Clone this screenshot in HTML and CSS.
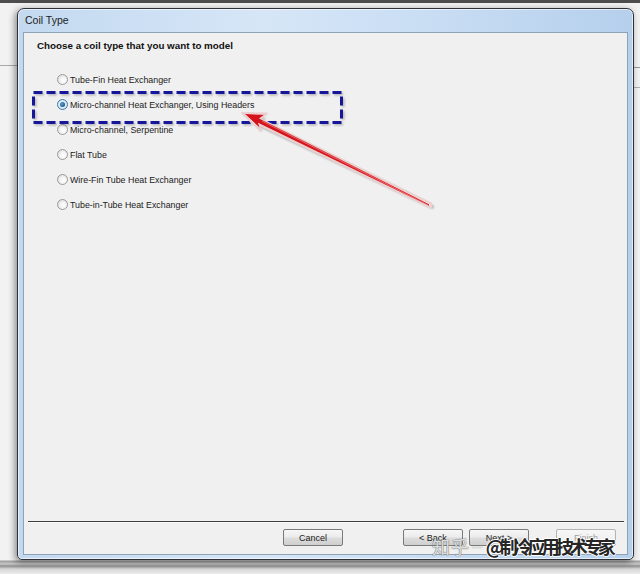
FILE: index.html
```html
<!DOCTYPE html>
<html lang="en">
<head>
<meta charset="utf-8">
<title>Coil Type</title>
<link rel="stylesheet" href="styles.css">
</head>
<body>
<div class="topbar"></div>
<div class="desktop">
  <div class="window">
    <div class="titlebar">Coil Type</div>
    <div class="client">
      <div class="content">
        <h1 class="heading">Choose a coil type that you want to model</h1>
        <ul class="options">
          <li class="option"><span class="radio"></span>Tube-Fin Heat Exchanger</li>
          <li class="option"><span class="radio checked"></span>Micro-channel Heat Exchanger, Using Headers</li>
          <li class="option"><span class="radio"></span>Micro-channel, Serpentine</li>
          <li class="option"><span class="radio"></span>Flat Tube</li>
          <li class="option"><span class="radio"></span>Wire-Fin Tube Heat Exchanger</li>
          <li class="option"><span class="radio"></span>Tube-in-Tube Heat Exchanger</li>
        </ul>
      </div>
      <div class="separator"></div>
      <div class="buttons">
        <button class="btn btn-cancel">Cancel</button>
        <button class="btn btn-back">&lt; Back</button>
        <button class="btn btn-next">Next &gt;</button>
        <button class="btn btn-finish" disabled>Finish</button>
      </div>
    </div>
  </div>
</div>

<!-- callout: dashed frame around the chosen option and a pointer arrow -->
<svg class="callout" width="640" height="574" viewBox="0 0 640 574">
  <defs>
    <filter id="soft" x="-10%" y="-10%" width="120%" height="120%">
      <feGaussianBlur stdDeviation="1"/>
    </filter>
  </defs>
  <rect x="35" y="94" width="308" height="30" fill="none" stroke="#000" stroke-opacity="0.25" stroke-width="3" stroke-dasharray="9 4" filter="url(#soft)"/>
  <rect x="33.5" y="92.5" width="308" height="30" fill="none" stroke="#16169a" stroke-width="3" stroke-dasharray="9 4"/>
  <!-- arrow shadow -->
  <polygon points="433,209 260,127 262,132 250,118 266,118 262,122 434,206" fill="#000" fill-opacity="0.3" filter="url(#soft)"/>
  <!-- arrow outline -->
  <polygon points="431,207.5 259,124.5 261,131 242,113 267,113.5 260,119 431,203.5" fill="#fff" stroke="#ead0d0" stroke-width="2" stroke-linejoin="round"/>
  <!-- arrow body -->
  <polygon points="429,205.8 258,122.8 259.5,127.5 245,114 264,114.8 259,118.5 429,204.3" fill="#d4141a"/>
  <line x1="428" y1="205" x2="262" y2="121" stroke="#f7a0a0" stroke-width="0.6"/>
</svg>

<div class="watermark"><span class="wm-logo">知乎</span><span class="wm-dash">—</span><span class="wm-name">@制冷应用技术专家</span></div>
</body>
</html>
```

FILE: styles.css
```css
* {
  box-sizing: border-box;
}

html, body {
  margin: 0;
  padding: 0;
}

body {
  width: 640px;
  height: 574px;
  overflow: hidden;
  position: relative;
  background: #f0f0f0;
  font-family: "Liberation Sans", Arial, sans-serif;
  color: #1a1a1a;
}

.topbar {
  height: 3px;
  background: #4d4d4d;
}

/* desktop behind the dialog, with the edges of the app window underneath */
.desktop {
  height: 571px;
  padding: 5px 0 0 17px;
  background:
    linear-gradient(#a8a8a8, #a8a8a8) 0 62px / 17px 1px no-repeat,
    linear-gradient(#9a9a9a, #9a9a9a) 634px 64px / 6px 1px no-repeat,
    linear-gradient(#b0b0b0, #b0b0b0) 634px 84px / 6px 1px no-repeat,
    linear-gradient(#f2f2f2 0, #f2f2f2 557px, #9c9c9c 558px, #c8c8c8 561px, #8f8f8f 563px, #d6d6d6 566px, #ececec 571px) 0 0 / 100% 100% no-repeat;
}

.window {
  width: 617px;
  height: 552px;
  display: flex;
  flex-direction: column;
  border: 1px solid #2e3238;
  border-radius: 7px 7px 5px 5px;
  padding: 0 5px 4px 5px;
  background: linear-gradient(90deg, #c3d9f0 0%, #d6e6f7 40%, #c7dcf3 70%, #b5cfec 100%);
  box-shadow: -2px 2px 7px rgba(0, 0, 0, 0.45), inset 0 0 0 1px rgba(255, 255, 255, 0.6);
}

.titlebar {
  height: 23px;
  flex: none;
  padding: 4px 0 0 2px;
  font-size: 10.5px;
  line-height: 14px;
  color: #1b1b1b;
}

.client {
  flex: 1;
  display: flex;
  flex-direction: column;
  background: #f0f0f0;
  border: 1px solid #8ea2b8;
}

.content {
  flex: 1;
  padding: 7px 0 0 13px;
}

.heading {
  margin: 0;
  font-size: 9.8px;
  line-height: 12px;
  font-weight: bold;
  color: #111;
}

.options {
  list-style: none;
  margin: 15px 0 0 20px;
  padding: 0;
}

.option {
  height: 25px;
  display: flex;
  align-items: center;
  font-size: 8.85px;
  color: #222;
}

.radio {
  width: 11px;
  height: 11px;
  margin-right: 2px;
  border-radius: 50%;
  border: 1px solid #9a9a9a;
  background: radial-gradient(circle at 60% 60%, #ffffff 0, #f4f4f4 40%, #d2d2d2 100%);
  position: relative;
}

.radio.checked {
  border-color: #3d78a8;
  background: radial-gradient(circle, #e9f3fb 0, #cfe3f3 100%);
}

.radio.checked::after {
  content: "";
  position: absolute;
  left: 2px;
  top: 2px;
  width: 5px;
  height: 5px;
  border-radius: 50%;
  background: radial-gradient(circle at 40% 40%, #5aa1d8 0, #1c4f7e 80%);
}

.separator {
  height: 2px;
  margin: 0 3px 0 4px;
  border-top: 1px solid #3e3e3e;
  border-bottom: 1px solid #fbfbfb;
}

.buttons {
  display: flex;
  align-items: flex-start;
  height: 31px;
  padding: 6px 11px 0 0;
}

.btn {
  width: 60px;
  height: 17px;
  padding: 0;
  font-family: "Liberation Sans", Arial, sans-serif;
  font-size: 9px;
  color: #222;
  border: 1px solid #7a7a7a;
  border-radius: 2px;
  background: linear-gradient(#f6f6f6 0, #ececec 45%, #dcdcdc 55%, #cfcfcf 100%);
}

.btn-cancel {
  margin-left: auto;
}

.btn-back {
  margin-left: 60px;
}

.btn-next {
  margin-left: 6px;
}

.btn-finish {
  margin-left: 27px;
  color: #a0a0a0;
  border-color: #b4b4b4;
  background: linear-gradient(#f7f7f7, #ececec);
}

.callout {
  position: absolute;
  left: 0;
  top: 0;
  pointer-events: none;
}

/* site watermark stamped over the lower right corner */
.watermark {
  position: absolute;
  left: 432px;
  top: 535px;
  font-family: "Noto Sans CJK SC", sans-serif;
  font-size: 18px;
  line-height: 22px;
  white-space: nowrap;
  display: flex;
}

.wm-logo {
  color: rgba(255, 255, 255, 0.8);
  text-shadow: 0 0 1px #666, 0 0 1px #666;
  letter-spacing: 1px;
}

.wm-dash {
  margin-left: 2px;
  font-size: 12px;
  color: rgba(255, 255, 255, 0.8);
  text-shadow: 0 0 1px #666;
}

.wm-name {
  margin-left: 3px;
  font-weight: bold;
  letter-spacing: -4px;
  color: #262626;
  text-shadow: 1px 0 0 #fff, -1px 0 0 #fff, 0 1px 0 #fff, 0 -1px 0 #fff;
}
```
